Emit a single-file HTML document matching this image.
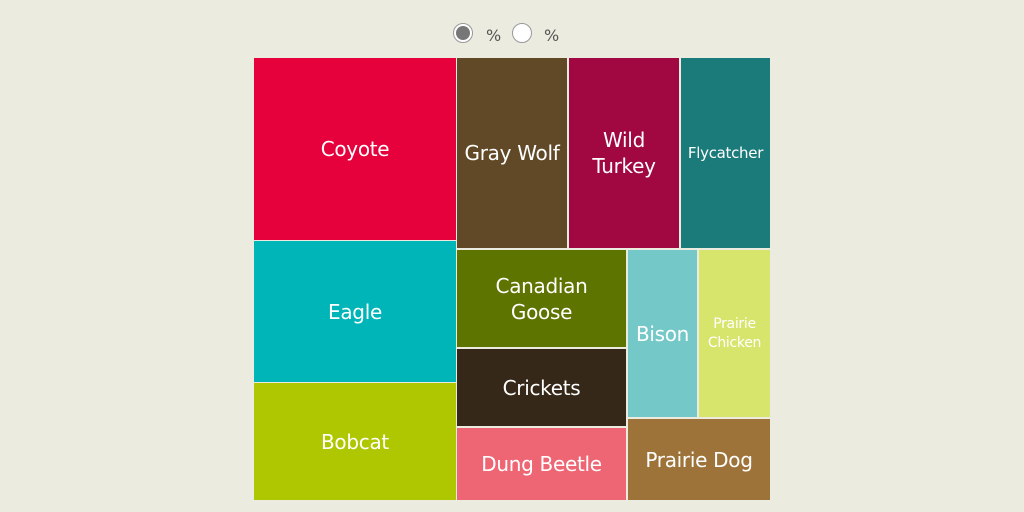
<!DOCTYPE html>
<html><head><meta charset="utf-8"><style>
body{margin:0;width:1024px;height:512px;background:#ecebe0;position:relative;overflow:hidden;font-family:"DejaVu Sans","Liberation Sans",sans-serif}
.r{position:absolute;display:flex;align-items:center;justify-content:center;text-align:center;color:#fff;font-size:20px;line-height:26px;letter-spacing:-0.3px}
.rad{position:absolute;top:23px;width:20px;height:20px;border:1px solid #999;border-radius:50%;box-sizing:border-box;background:#fff}
.lab{position:absolute;top:26px;font-size:16px;color:#555}
</style></head><body>
<div class="rad" style="left:453px"><div style="position:absolute;left:2px;top:2px;width:14px;height:14px;border-radius:50%;background:#777"></div></div>
<div class="lab" style="left:486px">%</div>
<div class="rad" style="left:512px"></div>
<div class="lab" style="left:544px">%</div>

<div class="r" style="left:254px;top:58px;width:202px;height:182px;background:#e6003c">Coyote</div>
<div class="r" style="left:254px;top:241px;width:202px;height:141px;background:#00b5b8">Eagle</div>
<div class="r" style="left:254px;top:383px;width:202px;height:117px;background:#afc700">Bobcat</div>
<div class="r" style="left:457px;top:58px;width:110px;height:190px;background:#614928">Gray Wolf</div>
<div class="r" style="left:569px;top:58px;width:110px;height:190px;background:#a10842">Wild<br>Turkey</div>
<div class="r" style="left:681px;top:58px;width:89px;height:190px;background:#1b7a7a;font-size:15px">Flycatcher</div>
<div class="r" style="left:457px;top:250px;width:169px;height:97px;background:#5d7400">Canadian<br>Goose</div>
<div class="r" style="left:457px;top:349px;width:169px;height:77px;background:#352818">Crickets</div>
<div class="r" style="left:457px;top:428px;width:169px;height:72px;background:#ee6674">Dung Beetle</div>
<div class="r" style="left:628px;top:250px;width:69px;height:167px;background:#74c8c8">Bison</div>
<div class="r" style="left:699px;top:250px;width:71px;height:167px;background:#d7e56d;font-size:14px;line-height:19px">Prairie<br>Chicken</div>
<div class="r" style="left:628px;top:419px;width:142px;height:81px;background:#9e733a">Prairie Dog</div>
</body></html>
